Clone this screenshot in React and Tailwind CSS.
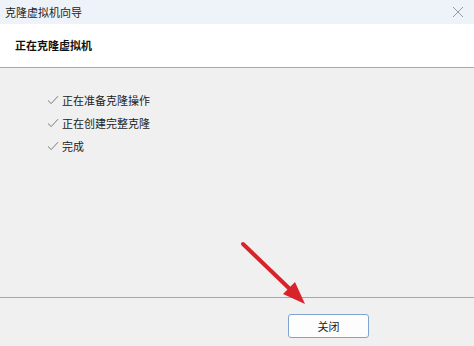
const font = { fontFamily: '"Microsoft YaHei", "Noto Sans CJK SC", sans-serif' }

function Check() {
  return (
    <svg width="12" height="10" viewBox="0 0 12 10" className="shrink-0">
      <path d="M1 5.5 L4.2 8.6 L11 1.2" fill="none" stroke="#7a7a7a" strokeWidth="1" />
    </svg>
  )
}

export default function App() {
  const steps = ['正在准备克隆操作', '正在创建完整克隆', '完成']
  return (
    <div className="relative w-[474px] h-[346px] flex flex-col bg-[#f0f0f0] text-[#1a1a1a] overflow-hidden" style={font}>
      <div className="h-[24px] flex items-center justify-between pl-[5px] pr-[10px] bg-[#eef3f9]">
        <span className="text-[11px] text-[#222]">克隆虚拟机向导</span>
        <svg width="12" height="12" viewBox="0 0 12 12">
          <path d="M1 1 L11 11 M11 1 L1 11" stroke="#9a9a9a" strokeWidth="1" />
        </svg>
      </div>
      <div className="h-[44px] bg-white flex items-center pl-[15px] border-b border-[#a8a8a8]">
        <span className="text-[11px] font-bold text-[#111]">正在克隆虚拟机</span>
      </div>
      <div className="flex-1 flex flex-col gap-[7px] pl-[47px] pt-[24px] border-b border-[#a8a8a8]">
        {steps.map((s) => (
          <div key={s} className="flex items-center gap-[3px] h-[16px]">
            <Check />
            <span className="text-[11px] text-[#222]">{s}</span>
          </div>
        ))}
      </div>
      <div className="h-[48px] flex items-start justify-end pr-[105px] pt-[16px]">
        <button className="w-[81px] h-[24px] rounded-[3px] border border-[#7ea4cf] bg-[#fdfdfd] text-[11px] text-[#222] flex items-center justify-center">
          关闭
        </button>
      </div>
      <svg className="absolute left-0 top-0 pointer-events-none" width="474" height="346">
        <line x1="243" y1="244" x2="294" y2="293" stroke="#d9232b" strokeWidth="4" strokeLinecap="round" />
        <polygon points="305,304 283,294 295,282" fill="#d9232b" />
      </svg>
    </div>
  )
}
